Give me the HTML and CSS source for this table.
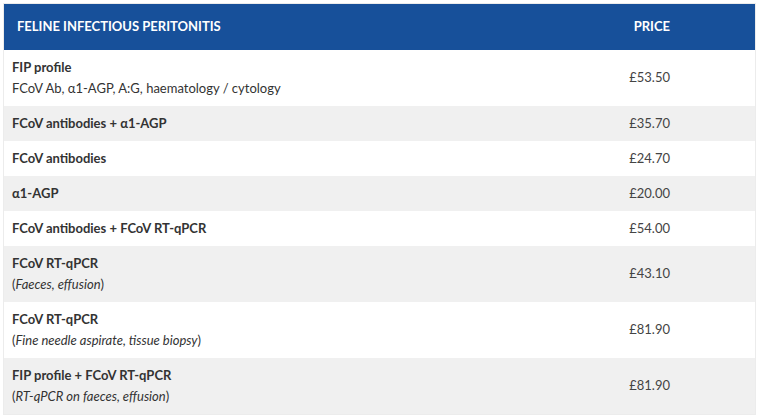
FILE: index.html
```html
<!DOCTYPE html>
<html lang="en">
<head>
<meta charset="utf-8">
<title>Feline Infectious Peritonitis</title>
<link rel="stylesheet" href="styles.css">
</head>
<body>
<div class="wrap">
<table class="prices">
  <thead>
    <tr><th class="test">FELINE INFECTIOUS PERITONITIS</th><th class="price">PRICE</th></tr>
  </thead>
  <tbody>
    <tr class="white"><td class="test"><strong>FIP profile</strong><br>FCoV Ab, α1-AGP, A:G, haematology / cytology</td><td class="price">£53.50</td></tr>
    <tr class="grey"><td class="test"><strong>FCoV antibodies + α1-AGP</strong></td><td class="price">£35.70</td></tr>
    <tr class="white"><td class="test"><strong>FCoV antibodies</strong></td><td class="price">£24.70</td></tr>
    <tr class="grey"><td class="test"><strong>α1-AGP</strong></td><td class="price">£20.00</td></tr>
    <tr class="white"><td class="test"><strong>FCoV antibodies + FCoV RT-qPCR</strong></td><td class="price">£54.00</td></tr>
    <tr class="grey"><td class="test"><strong>FCoV RT-qPCR</strong><br>(<em>Faeces, effusion</em>)</td><td class="price">£43.10</td></tr>
    <tr class="white"><td class="test"><strong>FCoV RT-qPCR</strong><br>(<em>Fine needle aspirate, tissue biopsy</em>)</td><td class="price">£81.90</td></tr>
    <tr class="grey"><td class="test"><strong>FIP profile + FCoV RT-qPCR</strong><br>(<em>RT-qPCR on faeces, effusion</em>)</td><td class="price">£81.90</td></tr>
  </tbody>
</table>
</div>
</body>
</html>
```
FILE: styles.css
```css
html, body {
  margin: 0;
  padding: 0;
  background: #ffffff;
}
.wrap {
  padding: 3px 12px 0 3px;
}
.prices {
  width: 753px;
  border-collapse: collapse;
  font-family: Lato, "Open Sans", sans-serif;
  font-size: 13px;
  line-height: 21px;
  color: #333333;
  border: 1px solid #ececec;
}
.prices th {
  background: #17509a;
  color: #ffffff;
  font-weight: 700;
  text-align: left;
  height: 46px;
  padding: 0 13px;
  box-sizing: border-box;
}
.prices th.price {
  text-align: right;
  padding-right: 85px;
}
.prices td {
  padding: 7px 8px;
  vertical-align: middle;
}
.prices td.price {
  text-align: right;
  padding-right: 85px;
  color: #444444;
  width: 120px;
}
.prices strong {
  font-weight: 700;
}
.prices em {
  font-style: italic;
}
.prices tr.white td {
  background: #ffffff;
}
.prices tr.grey td {
  background: #f0f0f0;
}
```
